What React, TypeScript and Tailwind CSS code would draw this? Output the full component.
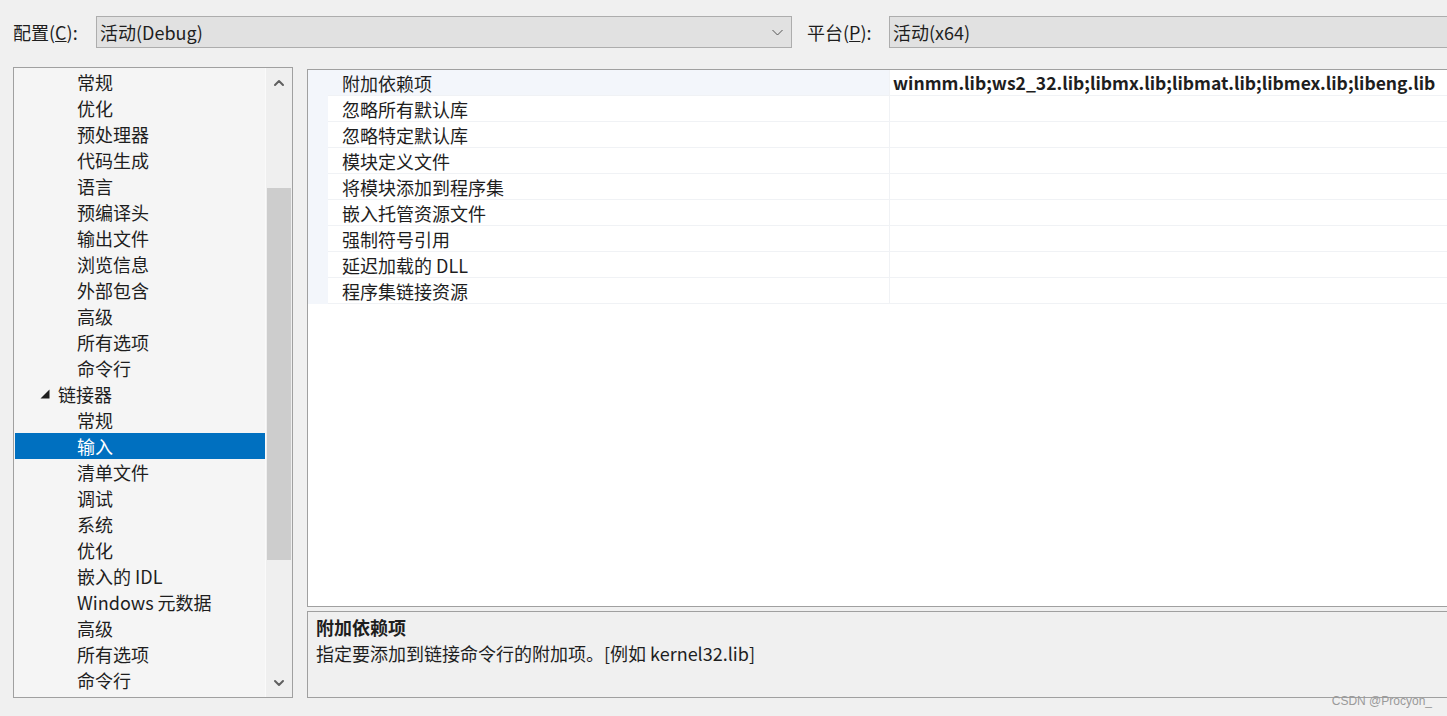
import { ChevronUp, ChevronDown } from "lucide-react";

// ---- Data ----
const treeItems: { label: string; group?: boolean; selected?: boolean }[] = [
  { label: "常规" },
  { label: "优化" },
  { label: "预处理器" },
  { label: "代码生成" },
  { label: "语言" },
  { label: "预编译头" },
  { label: "输出文件" },
  { label: "浏览信息" },
  { label: "外部包含" },
  { label: "高级" },
  { label: "所有选项" },
  { label: "命令行" },
  { label: "链接器", group: true },
  { label: "常规" },
  { label: "输入", selected: true },
  { label: "清单文件" },
  { label: "调试" },
  { label: "系统" },
  { label: "优化" },
  { label: "嵌入的 IDL" },
  { label: "Windows 元数据" },
  { label: "高级" },
  { label: "所有选项" },
  { label: "命令行" },
];

const props: { name: string; value?: string }[] = [
  { name: "附加依赖项", value: "winmm.lib;ws2_32.lib;libmx.lib;libmat.lib;libmex.lib;libeng.lib" },
  { name: "忽略所有默认库" },
  { name: "忽略特定默认库" },
  { name: "模块定义文件" },
  { name: "将模块添加到程序集" },
  { name: "嵌入托管资源文件" },
  { name: "强制符号引用" },
  { name: "延迟加载的 DLL" },
  { name: "程序集链接资源" },
];

// ---- Combo Box ----
function Combo({ text, width, arrow }: { text: string; width: string; arrow?: boolean }) {
  return (
    <div className={`${width} h-[32px] shrink-0 flex items-center justify-between bg-[#e1e1e1] border border-[#adadad] pl-[3px] pr-[8px]`}>
      <span>{text}</span>
      {arrow && (
        <svg width="11" height="7" viewBox="0 0 11 7" className="text-[#555]">
          <path d="M0.5 1 L5.5 6 L10.5 1" fill="none" stroke="currentColor" strokeWidth="1" />
        </svg>
      )}
    </div>
  );
}

// ---- Tree Panel ----
function TreePanel() {
  return (
    <div className="w-[280px] h-[631px] shrink-0 border border-[#a0a0a0] bg-[#f5f5f5] flex">
      <div className="flex-1 pt-[1px] pl-[1px]">
        {treeItems.map((t, i) => (
          <div
            key={i}
            className={`h-[26px] flex items-center ${t.selected ? "bg-[#0070c0] text-white" : ""}`}
          >
            {t.group ? (
              <div className="flex items-center">
                <svg width="10" height="10" viewBox="0 0 10 10" className="ml-[25px] mr-[8px]">
                  <polygon points="9.5,0.5 9.5,9.5 0.5,9.5" fill="#1e1e1e" />
                </svg>
                <span>{t.label}</span>
              </div>
            ) : (
              <span className="pl-[62px]">{t.label}</span>
            )}
          </div>
        ))}
      </div>
      <div className="w-[1px] bg-[#fafafa]" />
      <div className="w-[26px] bg-[#efefef] flex flex-col items-center">
        <div className="h-[30px] flex items-center justify-center">
          <ChevronUp size={16} strokeWidth={3} className="text-[#606060]" />
        </div>
        <div className="h-[90px]" />
        <div className="w-[24px] h-[372px] bg-[#cdcdcd]" />
        <div className="flex-1" />
        <div className="h-[28px] flex items-center justify-center">
          <ChevronDown size={16} strokeWidth={3} className="text-[#606060]" />
        </div>
      </div>
    </div>
  );
}

// ---- Property Grid ----
function PropertyGrid() {
  return (
    <div className="h-[538px] border border-[#a0a0a0] border-r-0 bg-white">
      <div className="flex">
        <div className="w-[20px] h-[234px] bg-[#f3f6fb]" />
        <div className="flex-1">
          {props.map((p, i) => (
            <div key={i} className="h-[26px] flex border-b border-[#f0f2f5]">
              <div className={`w-[562px] pl-[14px] flex items-center border-r border-[#f0f2f5] ${i === 0 ? "bg-[#f3f6fb]" : ""}`}>
                {p.name}
              </div>
              <div className="flex-1 pl-[3px] flex items-center font-bold whitespace-nowrap text-[17.5px]">{p.value}</div>
            </div>
          ))}
        </div>
      </div>
    </div>
  );
}

// ---- Description Panel ----
function Description() {
  return (
    <div className="h-[87px] border border-[#a0a0a0] border-r-0 bg-[#f0f0f0] pl-[8px] pt-[2px]">
      <div className="h-[26px] flex items-center font-bold">附加依赖项</div>
      <div className="h-[26px] flex items-center">指定要添加到链接命令行的附加项。[例如 kernel32.lib]</div>
    </div>
  );
}

// ---- App ----
export default function App() {
  return (
    <div
      className="relative w-[1447px] h-[716px] overflow-hidden bg-[#f0f0f0] text-[#1e1e1e] text-[18px] leading-none"
      style={{ fontFamily: '"Noto Sans CJK SC", "Noto Sans", sans-serif' }}
    >
      <div className="flex items-center pt-[16px] pl-[13px] whitespace-nowrap">
        <span className="w-[83px] shrink-0">配置(<u>C</u>):</span>
        <Combo text="活动(Debug)" width="w-[696px]" arrow />
        <span className="ml-[15px] w-[82px] shrink-0">平台(<u>P</u>):</span>
        <Combo text="活动(x64)" width="w-[580px]" />
      </div>
      <div className="flex pt-[19px] pl-[13px] gap-[14px]">
        <TreePanel />
        <div className="w-[1150px] shrink-0 pt-[2px] flex flex-col gap-[4px]">
          <PropertyGrid />
          <Description />
        </div>
      </div>
      <div
        className="absolute right-[15px] bottom-[9px] text-[12px] text-[#9a9a9a]"
        style={{ fontFamily: '"Liberation Sans", sans-serif' }}
      >
        CSDN @Procyon_
      </div>
    </div>
  );
}
